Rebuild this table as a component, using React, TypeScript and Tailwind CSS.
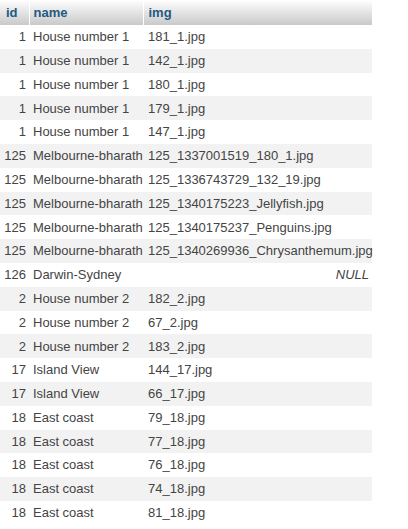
import React from 'react';

type Row = { id: number; name: string; img: string | null };

const rows: Row[] = [
  { id: 1, name: 'House number 1', img: '181_1.jpg' },
  { id: 1, name: 'House number 1', img: '142_1.jpg' },
  { id: 1, name: 'House number 1', img: '180_1.jpg' },
  { id: 1, name: 'House number 1', img: '179_1.jpg' },
  { id: 1, name: 'House number 1', img: '147_1.jpg' },
  { id: 125, name: 'Melbourne-bharath', img: '125_1337001519_180_1.jpg' },
  { id: 125, name: 'Melbourne-bharath', img: '125_1336743729_132_19.jpg' },
  { id: 125, name: 'Melbourne-bharath', img: '125_1340175223_Jellyfish.jpg' },
  { id: 125, name: 'Melbourne-bharath', img: '125_1340175237_Penguins.jpg' },
  { id: 125, name: 'Melbourne-bharath', img: '125_1340269936_Chrysanthemum.jpg' },
  { id: 126, name: 'Darwin-Sydney', img: null },
  { id: 2, name: 'House number 2', img: '182_2.jpg' },
  { id: 2, name: 'House number 2', img: '67_2.jpg' },
  { id: 2, name: 'House number 2', img: '183_2.jpg' },
  { id: 17, name: 'Island View', img: '144_17.jpg' },
  { id: 17, name: 'Island View', img: '66_17.jpg' },
  { id: 18, name: 'East coast', img: '79_18.jpg' },
  { id: 18, name: 'East coast', img: '77_18.jpg' },
  { id: 18, name: 'East coast', img: '76_18.jpg' },
  { id: 18, name: 'East coast', img: '74_18.jpg' },
  { id: 18, name: 'East coast', img: '81_18.jpg' },
];

export default function App() {
  return (
    <div className="w-[408px] h-[529px] bg-white overflow-hidden font-['Liberation_Sans',Arial,sans-serif] text-[13px] text-[#444]">
      <table className="w-[372px] table-fixed border-collapse">
        <colgroup>
          <col className="w-[29px]" />
          <col className="w-[114px]" />
          <col className="w-[229px]" />
        </colgroup>
        <thead>
          <tr className="h-[25px] bg-gradient-to-b from-white to-[#c9c9c9] text-[#235a81] font-bold">
            <th className="text-left pl-[6px] border-r border-white">id</th>
            <th className="text-left pl-[4px] border-r border-white">name</th>
            <th className="text-left pl-[5px]">img</th>
          </tr>
        </thead>
        <tbody>
          {rows.map((row, i) => (
            <tr key={i} className={`h-[23.8px] ${i % 2 === 0 ? 'bg-white' : 'bg-[#f2f2f2]'}`}>
              <td className="text-right pr-[3px] whitespace-nowrap">{row.id}</td>
              <td className="pl-[4px] whitespace-nowrap">{row.name}</td>
              {row.img ? (
                <td className="pl-[5px] whitespace-nowrap">{row.img}</td>
              ) : (
                <td className="text-right pr-[3px] italic">NULL</td>
              )}
            </tr>
          ))}
        </tbody>
      </table>
    </div>
  );
}
